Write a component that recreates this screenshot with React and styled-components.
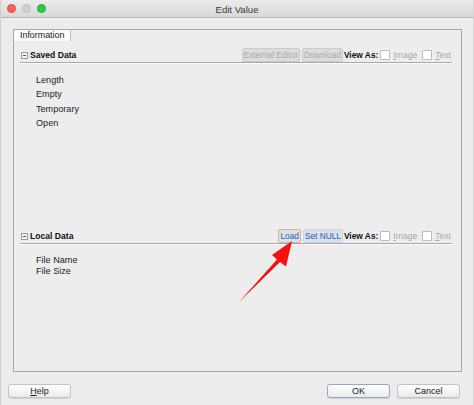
import styled, { createGlobalStyle } from "styled-components";

const GlobalStyle = createGlobalStyle`
  html, body {
    margin: 0;
    padding: 0;
    background: #ececec;
  }
  body {
    font-family: "Liberation Sans", Arial, sans-serif;
    font-size: 9px;
    color: #1a1a1a;
  }
`;

const savedFields = ["Length", "Empty", "Temporary", "Open"];
const localFields = ["File Name", "File Size"];

function ViewAs() {
  return (
    <>
      <ViewLabel>View As:</ViewLabel>
      <Check />
      <CheckLabel>
        <u>I</u>mage
      </CheckLabel>
      <Check style={{ marginLeft: 5 }} />
      <CheckLabel>
        <u>T</u>ext
      </CheckLabel>
    </>
  );
}

export default function App() {
  return (
    <Window>
      <GlobalStyle />
      <TitleBar>
        <Lights>
          <Light color="#fc605c" ring="#de4a45" />
          <Light color="#d0d0d0" ring="#bdbdbd" />
          <Light color="#34c84a" ring="#27a93a" />
        </Lights>
        <Title>Edit Value</Title>
        <span />
      </TitleBar>

      <Content>
        <Panel>
          <TabStrip>
            <Tab>Information</Tab>
          </TabStrip>

          <Section height={181}>
            <SectionHeader>
              <Collapse />
              <SectionTitle>Saved Data</SectionTitle>
              <Tools>
                <SmallButton disabled>External Editor</SmallButton>
                <SmallButton disabled style={{ marginLeft: 2 }}>
                  Download
                </SmallButton>
                <ViewAs />
              </Tools>
            </SectionHeader>
            <FieldList lineHeight={14.4} top={10}>
              {savedFields.map((f) => (
                <li key={f}>{f}</li>
              ))}
            </FieldList>
          </Section>

          <Section>
            <SectionHeader>
              <Collapse />
              <SectionTitle>Local Data</SectionTitle>
              <Tools>
                <SmallButton focused>Load</SmallButton>
                <SmallButton style={{ marginLeft: 2 }}>Set NULL</SmallButton>
                <ViewAs />
              </Tools>
            </SectionHeader>
            <FieldList lineHeight={11} top={11}>
              {localFields.map((f) => (
                <li key={f}>{f}</li>
              ))}
            </FieldList>
          </Section>
        </Panel>

        <Footer>
          <DialogButton>
            <u>H</u>elp
          </DialogButton>
          <Right>
            <DialogButton primary>OK</DialogButton>
            <DialogButton>Cancel</DialogButton>
          </Right>
        </Footer>
      </Content>

      <Pointer viewBox="0 0 474 405" width="474" height="405">
        <polygon
          points="238,302 276,259.5 271,255 291,241 285,266.5 279,262"
          fill="#f2120f"
        />
      </Pointer>
    </Window>
  );
}

const Window = styled.div`
  position: relative;
  width: 474px;
  height: 405px;
  display: flex;
  flex-direction: column;
  background: #ececec;
  box-sizing: border-box;
  border-left: 1px solid #cfcfcf;
  border-right: 1px solid #d6d6d6;
  overflow: hidden;
`;

const TitleBar = styled.div`
  height: 17px;
  flex: none;
  display: grid;
  grid-template-columns: 1fr auto 1fr;
  align-items: center;
  background: linear-gradient(#ececec, #d8d8d8);
  border-bottom: 1px solid #b4b4b4;
`;

const Lights = styled.div`
  display: flex;
  gap: 6px;
  padding-left: 6px;
`;

const Light = styled.span`
  width: 9px;
  height: 9px;
  border-radius: 50%;
  box-sizing: border-box;
  background: ${(p) => p.color};
  border: 0.5px solid ${(p) => p.ring};
`;

const Title = styled.div`
  font-size: 9.6px;
  color: #3a3a3a;
  padding-top: 1px;
`;

const Content = styled.div`
  flex: 1;
  display: flex;
  flex-direction: column;
  padding: 11px 11px 0 12px;
`;

const Panel = styled.div`
  height: 343px;
  box-sizing: border-box;
  border: 1px solid #a8a8a8;
  display: flex;
  flex-direction: column;
  background: #ededed;
`;

const TabStrip = styled.div`
  height: 11px;
  display: flex;
  flex: none;
`;

const Tab = styled.div`
  width: 57px;
  box-sizing: border-box;
  padding-left: 6px;
  line-height: 11px;
  font-size: 8.9px;
  background: #fbfbfb;
  border-right: 1px solid #bdbdbd;
  color: #222;
`;

const Section = styled.div`
  ${(p) => (p.height ? `height: ${p.height}px; flex: none;` : "flex: 1;")}
  box-sizing: border-box;
  padding: 7px 9px 0 6px;
  display: flex;
  flex-direction: column;
`;

const SectionHeader = styled.div`
  height: 14px;
  flex: none;
  display: flex;
  align-items: center;
  border-bottom: 1px solid #a9a9a9;
  box-shadow: 0 1px 0 #fafafa;
`;

const Collapse = styled.span`
  position: relative;
  width: 7px;
  height: 7px;
  margin-left: 1px;
  box-sizing: border-box;
  border: 1px solid #9a9a9a;
  background: #f4f4f4;
  &::after {
    content: "";
    position: absolute;
    left: 1px;
    right: 1px;
    top: 2px;
    height: 1px;
    background: #555;
  }
`;

const SectionTitle = styled.span`
  margin-left: 2px;
  font-weight: bold;
  font-size: 8.6px;
  color: #111;
`;

const Tools = styled.div`
  margin-left: auto;
  display: flex;
  align-items: center;
  height: 14px;
  padding-right: 1px;
`;

const SmallButton = styled.button`
  height: 14px;
  padding: 0 1px;
  margin: 0;
  font-family: "Liberation Sans", Arial, sans-serif;
  font-size: 8.3px;
  border-radius: 2px;
  box-sizing: border-box;
  border: 1px solid
    ${(p) => (p.focused ? "#d8b47e" : p.disabled ? "#cbcbcb" : "#cdd5e2")};
  background: ${(p) => (p.disabled ? "#dcdcdc" : "#dbe1eb")};
  color: ${(p) => (p.disabled ? "#a9a9a9" : "#2a5bb0")};
`;

const ViewLabel = styled.span`
  margin-left: 1px;
  font-weight: bold;
  font-size: 8.4px;
  color: #111;
`;

const Check = styled.span`
  width: 10px;
  height: 10px;
  margin-left: 2px;
  box-sizing: border-box;
  border: 1px solid #bdbdbd;
  border-radius: 1px;
  background: #fff;
`;

const CheckLabel = styled.span`
  margin-left: 3px;
  font-size: 8.6px;
  color: #a8a8a8;
  u {
    text-decoration-thickness: 1px;
  }
`;

const FieldList = styled.ul`
  list-style: none;
  margin: ${(p) => p.top}px 0 0 0;
  padding: 0 0 0 16px;
  line-height: ${(p) => p.lineHeight}px;
  font-size: 9.1px;
  color: #1c1c1c;
`;

const Footer = styled.div`
  margin-top: 12px;
  display: flex;
  justify-content: space-between;
  padding: 0 2px 0 0;
  margin-left: -5px;
`;

const Right = styled.div`
  display: flex;
  gap: 7px;
`;

const DialogButton = styled.button`
  width: 63px;
  height: 14px;
  padding: 0;
  margin: 0;
  box-sizing: border-box;
  font-family: "Liberation Sans", Arial, sans-serif;
  font-size: 9px;
  color: #1a1a1a;
  border-radius: 3px;
  border: 1px solid ${(p) => (p.primary ? "#93a9c8" : "#c3c3c3")};
  background: linear-gradient(#ffffff, #e9e9e9);
  box-shadow: 0 0.5px 0 #b5b5b5;
`;

const Pointer = styled.svg`
  position: absolute;
  left: 0;
  top: 0;
  pointer-events: none;
`;
